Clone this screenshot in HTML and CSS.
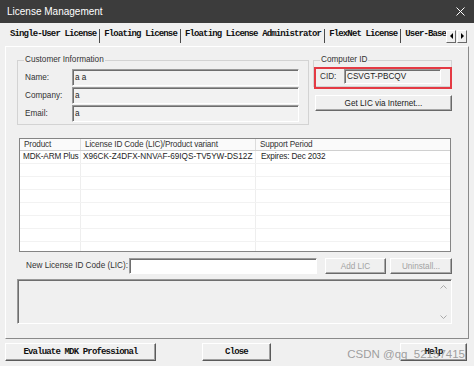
FILE: index.html
```html
<!DOCTYPE html>
<html>
<head>
  <meta charset="UTF-8">
  <title>License Management</title>
  <link rel="stylesheet" href="styles.css">
</head>
<body>
  <div class="window">
    <!--标题栏-->
    <div class="titlebar">
      <span>License Management</span>
      <svg class="close" viewBox="0 0 9 9"><path d="M0.5 0.5L8.5 8.5M8.5 0.5L0.5 8.5" stroke="#fff" stroke-width="1"/></svg>
    </div>

    <!--选项卡-->
    <div class="tabs">
      <div class="tab-list">
        <div class="tab active">Single-User License</div>
        <div class="tab">Floating License</div>
        <div class="tab">Floating License Administrator</div>
        <div class="tab">FlexNet License</div>
        <div class="tab">User-Based License</div>
      </div>
      <div class="tab-arrows">
        <span class="left"></span>
        <span class="right"></span>
      </div>
    </div>

    <div class="panel">
      <div class="top-row">
        <fieldset class="group customer">
          <legend>Customer Information</legend>
          <div class="field"><label>Name:</label><div class="input">a a</div></div>
          <div class="field"><label>Company:</label><div class="input">a</div></div>
          <div class="field"><label>Email:</label><div class="input">a</div></div>
        </fieldset>

        <div class="computer">
          <fieldset class="group cid-group">
            <legend>Computer ID</legend>
            <div class="field cid"><label>CID:</label><div class="input">CSVGT-PBCQV</div></div>
          </fieldset>
          <div class="mark"></div>
          <div class="btn get-lic">Get LIC via Internet...</div>
        </div>
      </div>

      <!--产品列表-->
      <div class="lic-table">
        <div class="row head">
          <div class="cell">Product</div>
          <div class="cell">License ID Code (LIC)/Product variant</div>
          <div class="cell">Support Period</div>
        </div>
        <div class="row">
          <div class="cell">MDK-ARM Plus</div>
          <div class="cell code">X96CK-Z4DFX-NNVAF-69IQS-TV5YW-DS12Z</div>
          <div class="cell">Expires: Dec 2032</div>
        </div>
        <div class="row"><div class="cell"></div><div class="cell"></div><div class="cell"></div></div>
        <div class="row"><div class="cell"></div><div class="cell"></div><div class="cell"></div></div>
        <div class="row"><div class="cell"></div><div class="cell"></div><div class="cell"></div></div>
        <div class="row"><div class="cell"></div><div class="cell"></div><div class="cell"></div></div>
        <div class="row"><div class="cell"></div><div class="cell"></div><div class="cell"></div></div>
        <div class="row"><div class="cell"></div><div class="cell"></div><div class="cell"></div></div>
        <div class="row"><div class="cell"></div><div class="cell"></div><div class="cell"></div></div>
        <div class="row"><div class="cell"></div><div class="cell"></div><div class="cell"></div></div>
      </div>

      <div class="new-lic">
        <label>New License ID Code (LIC):</label>
        <div class="input white"></div>
        <div class="btn disabled add">Add LIC</div>
        <div class="btn disabled uninstall">Uninstall...</div>
      </div>

      <div class="log">
        <div class="scroll">
          <svg viewBox="0 0 7 4"><path d="M0.5 3.5L3.5 0.5L6.5 3.5" fill="none" stroke="#a8a8a8"/></svg>
          <svg viewBox="0 0 7 4"><path d="M0.5 0.5L3.5 3.5L6.5 0.5" fill="none" stroke="#a8a8a8"/></svg>
        </div>
      </div>
    </div>

    <!--底部按钮-->
    <div class="footer">
      <div class="fbtn evaluate">Evaluate MDK Professional</div>
      <div class="fbtn close-btn">Close</div>
      <div class="fbtn help">Help</div>
    </div>

    <div class="watermark">CSDN @qq_52157415</div>
  </div>
</body>
</html>
```

FILE: styles.css
```css
body{margin:0;background:#f0f0f0;font-family:"Liberation Sans",Arial,sans-serif;font-size:8.2px;color:#1e1e1e;}

.window{
  position: relative;
  width: 474px;
  height: 366px;
  overflow: hidden;
}

.titlebar{
  display: flex;
  align-items: center;
  justify-content: space-between;
  height: 23px;
  padding: 0 9px 0 7px;
  box-sizing: border-box;
  background-color: #3c3c3c;
  color: #fff;
  font-size: 10px;
}
.titlebar .close{
  width: 9px;
  height: 9px;
}

/* tabs */
.tabs{
  display: flex;
  align-items: flex-start;
  height: 23px;
  padding: 6px 0 0 6px;
  box-sizing: border-box;
}
.tab-list{
  display: flex;
  flex: none;
  width: 440px;
  overflow: hidden;
  white-space: nowrap;
}
.tab{
  flex: none;
  height: 14px;
  line-height: 14px;
  padding: 0 3px 0 4px;
  border-right: 1px solid #4a4a4a;
  font: bold 9px "Liberation Mono",monospace;
  letter-spacing: -0.86px;
  color: #111;
}
.tab-arrows{
  display: flex;
  gap: 1px;
  margin-top: 1px;
}
.tab-arrows span{
  position: relative;
  width: 8px;
  height: 11px;
  border: 1px solid;
  border-color: #fff #696969 #696969 #fff;
  background-color: #f0f0f0;
}
.tab-arrows span::before{
  content: "";
  position: absolute;
  top: 2px;
  left: 2px;
  border: 3px solid transparent;
}
.tab-arrows .left::before{
  left: 0;
  border-right-color: #000;
}
.tab-arrows .right::before{
  left: 3px;
  border-left-color: #000;
}

/* panel */
.panel{
  width: 464px;
  height: 293px;
  margin-left: 5px;
  padding: 8px 16px 0 11px;
  box-sizing: border-box;
  border: 1px solid;
  border-color: #fff #8a8a8a #8a8a8a #fff;
}
.top-row{
  display: flex;
  align-items: flex-start;
  gap: 4px;
}
.group{
  min-width: 0;
  margin: 0;
  padding: 4px 9px 2px 6px;
  box-sizing: border-box;
  border: 1px solid #d3d3d3;
}
.group legend{
  padding: 0 1px;
  line-height: 10px;
  color: #333;
}
.customer{
  width: 292px;
}
.field{
  display: flex;
  align-items: center;
  height: 17px;
  margin-bottom: 1px;
}
.field:last-child{
  margin-bottom: 0;
}
.field label{
  width: 47px;
  padding-left: 1px;
  color: #333;
}
.input{
  flex: 1;
  height: 100%;
  padding-left: 2px;
  box-sizing: border-box;
  border: 1px solid;
  border-color: #9a9a9a #fff #fff #9a9a9a;
  box-shadow: inset 1px 1px #6e6e6e;
  background-color: #f2f2f2;
  display: flex;
  align-items: center;
}

.computer{
  position: relative;
  width: 139px;
}
.cid-group{
  width: 139px;
  padding-right: 10px;
}
.field.cid{
  height: 15px;
}
.field.cid label{
  width: 24px;
  padding-left: 0;
}
.mark{
  position: absolute;
  top: 12px;
  left: 1px;
  width: 138px;
  height: 22px;
  box-sizing: border-box;
  border: 2px solid #e43a44;
}

.btn{
  display: flex;
  align-items: center;
  justify-content: center;
  height: 16px;
  box-sizing: border-box;
  border: 1px solid;
  border-color: #fff #696969 #696969 #fff;
  box-shadow: inset -1px -1px #a8a8a8;
  background-color: #f0f0f0;
  color: #222;
}
.get-lic{
  width: 137px;
  margin: 8px 0 0 2px;
}
.btn.disabled{
  color: #a3a3a3;
}

/* list */
.lic-table{
  width: 432px;
  height: 114px;
  margin: 13px 0 0 2px;
  box-sizing: border-box;
  border: 1px solid #858585;
  background-color: #fff;
  overflow: hidden;
}
.row{
  display: grid;
  grid-template-columns: 61px 175px 1fr;
  height: 12px;
  border-bottom: 1px solid #f2f2f2;
}
.row .cell{
  padding-left: 3px;
  line-height: 12px;
  border-right: 1px solid #eeeeee;
  white-space: nowrap;
  overflow: hidden;
  letter-spacing: -0.15px;
}
.row .cell.code{
  padding-left: 2px;
  letter-spacing: 0;
}
.row .cell:last-child{
  border-right: none;
  padding-left: 5px;
}
.row.head{
  height: 11px;
  border-bottom: 1px solid #d0d0d0;
  background-color: #fafafa;
}
.row.head .cell{
  line-height: 11px;
  padding-left: 4px;
  border-right-color: #dcdcdc;
  color: #333;
}

.new-lic{
  display: flex;
  height: 16px;
  margin-top: 6px;
}
.new-lic label{
  width: 103px;
  padding-left: 9px;
  line-height: 16px;
  color: #333;
}
.new-lic .input{
  flex: none;
  width: 188px;
}
.input.white{
  background-color: #fff;
}
.add{
  width: 61px;
  margin-left: 8px;
}
.uninstall{
  width: 62px;
  margin-left: 4px;
}

.log{
  display: flex;
  justify-content: flex-end;
  height: 45px;
  margin-top: 5px;
  box-sizing: border-box;
  border: 1px solid;
  border-color: #9a9a9a #fff #fff #9a9a9a;
  box-shadow: inset 1px 1px #6e6e6e;
}
.scroll{
  display: flex;
  flex-direction: column;
  justify-content: space-between;
  align-items: center;
  width: 15px;
  padding: 5px 0 4px;
  box-sizing: border-box;
}
.scroll svg{
  width: 7px;
  height: 4px;
}

/* footer */
.footer{
  display: flex;
  margin-top: 4px;
  padding-left: 5px;
}
.fbtn{
  display: flex;
  align-items: center;
  justify-content: center;
  height: 18px;
  box-sizing: border-box;
  border: 1px solid;
  border-color: #fff #5a5a5a #5a5a5a #fff;
  box-shadow: inset -1px -1px #a0a0a0;
  font: bold 9px "Liberation Mono",monospace;
  letter-spacing: -0.84px;
  color: #111;
}
.evaluate{
  width: 151px;
}
.close-btn{
  width: 69px;
  margin-left: 46px;
}
.help{
  width: 67px;
  margin-left: 129px;
}

.watermark{
  position: absolute;
  top: 348px;
  right: 9px;
  font-size: 11.5px;
  color: rgba(130,130,130,.75);
}
```
